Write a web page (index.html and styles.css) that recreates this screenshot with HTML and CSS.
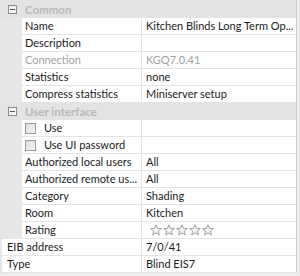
FILE: index.html
```html
<!DOCTYPE html>
<html>
<head>
<meta charset="utf-8">
<link rel="stylesheet" href="styles.css">
</head>
<body>
<div class="panel">
  <div class="group">
    <div class="ghead first"><span class="toggle"></span><span class="gtitle">Common</span></div>
    <div class="row"><div class="gut"></div><div class="name">Name</div><div class="val">Kitchen Blinds Long Term Op...</div></div>
    <div class="row"><div class="gut"></div><div class="name">Description</div><div class="val"></div></div>
    <div class="row dim"><div class="gut"></div><div class="name">Connection</div><div class="val">KGQ7.0.41</div></div>
    <div class="row"><div class="gut"></div><div class="name">Statistics</div><div class="val">none</div></div>
    <div class="row"><div class="gut"></div><div class="name">Compress statistics</div><div class="val">Miniserver setup</div></div>
  </div>
  <div class="group">
    <div class="ghead"><span class="toggle"></span><span class="gtitle">User interface</span></div>
    <div class="row"><div class="gut"></div><div class="name"><span class="cb"></span>Use</div><div class="val"></div></div>
    <div class="row"><div class="gut"></div><div class="name"><span class="cb"></span>Use UI password</div><div class="val"></div></div>
    <div class="row"><div class="gut"></div><div class="name">Authorized local users</div><div class="val">All</div></div>
    <div class="row"><div class="gut"></div><div class="name">Authorized remote us...</div><div class="val">All</div></div>
    <div class="row"><div class="gut"></div><div class="name">Category</div><div class="val">Shading</div></div>
    <div class="row"><div class="gut"></div><div class="name">Room</div><div class="val">Kitchen</div></div>
    <div class="row"><div class="gut"></div><div class="name">Rating</div><div class="val stars">
      <svg class="star" viewBox="0 0 12 12"><path d="M6 0.8 L7.5 4.3 L11.3 4.6 L8.4 7.1 L9.3 10.9 L6 8.9 L2.7 10.9 L3.6 7.1 L0.7 4.6 L4.5 4.3 Z"/></svg>
      <svg class="star" viewBox="0 0 12 12"><path d="M6 0.8 L7.5 4.3 L11.3 4.6 L8.4 7.1 L9.3 10.9 L6 8.9 L2.7 10.9 L3.6 7.1 L0.7 4.6 L4.5 4.3 Z"/></svg>
      <svg class="star" viewBox="0 0 12 12"><path d="M6 0.8 L7.5 4.3 L11.3 4.6 L8.4 7.1 L9.3 10.9 L6 8.9 L2.7 10.9 L3.6 7.1 L0.7 4.6 L4.5 4.3 Z"/></svg>
      <svg class="star" viewBox="0 0 12 12"><path d="M6 0.8 L7.5 4.3 L11.3 4.6 L8.4 7.1 L9.3 10.9 L6 8.9 L2.7 10.9 L3.6 7.1 L0.7 4.6 L4.5 4.3 Z"/></svg>
      <svg class="star" viewBox="0 0 12 12"><path d="M6 0.8 L7.5 4.3 L11.3 4.6 L8.4 7.1 L9.3 10.9 L6 8.9 L2.7 10.9 L3.6 7.1 L0.7 4.6 L4.5 4.3 Z"/></svg>
    </div></div>
  </div>
  <div class="row top"><div class="gut small"></div><div class="name wide">EIB address</div><div class="val">7/0/41</div></div>
  <div class="row top"><div class="gut small"></div><div class="name wide">Type</div><div class="val">Blind EIS7</div></div>
</div>
</body>
</html>
```
FILE: styles.css
```css
html, body {
  margin: 0;
  padding: 0;
  background: #ededed;
}
body {
  font-family: "Lato", "Open Sans", sans-serif;
  font-size: 11px;
  color: #1b1b1b;
  width: 300px;
  height: 276px;
  overflow: hidden;
}
.panel {
  width: 296px;
  border-right: 1px solid #c9d1dc;
  background: #ffffff;
}
.ghead {
  height: 17px;
  display: flex;
  align-items: center;
  background: #e3e3e3;
}
.ghead.first { height: 18px; }
.toggle {
  width: 7px;
  height: 7px;
  border: 1px solid #8a8a8a;
  margin-left: 8px;
  margin-right: 8px;
  position: relative;
  background: #f4f4f4;
}
.toggle::after {
  content: "";
  position: absolute;
  left: 1px;
  top: 3px;
  width: 5px;
  height: 1px;
  background: #555;
}
.gtitle {
  font-weight: bold;
  font-size: 11.5px;
  color: #b9b9b9;
  line-height: 17px;
}
.row {
  display: flex;
  height: 17px;
  box-sizing: border-box;
  border-bottom: 1px solid #e4e4e4;
  line-height: 16px;
}
.gut {
  width: 22px;
  flex: none;
  background: #e6e6e6;
  margin-bottom: -1px;
}
.gut.small { width: 2px; }
.name {
  width: 120px;
  flex: none;
  padding-left: 3px;
  box-sizing: border-box;
  border-right: 1px solid #e4e4e4;
  white-space: nowrap;
  overflow: hidden;
  display: flex;
  align-items: center;
}
.name.wide { width: 140px; padding-left: 5px; }
.val {
  flex: 1;
  padding-left: 4px;
  white-space: nowrap;
  overflow: hidden;
}
.dim .name, .dim .val { color: #a2a2a2; }
.cb {
  width: 9px;
  height: 9px;
  border: 1px solid #9a9a9a;
  background: linear-gradient(135deg, #dcdcdc, #f6f6f6);
  margin-right: 8px;
  flex: none;
}
.stars {
  display: flex;
  align-items: center;
  gap: 1px;
  padding-left: 8px;
}
.star {
  width: 12px;
  height: 12px;
  fill: #f2f2f2;
  stroke: #a0a0a0;
  stroke-width: 1;
}
```
